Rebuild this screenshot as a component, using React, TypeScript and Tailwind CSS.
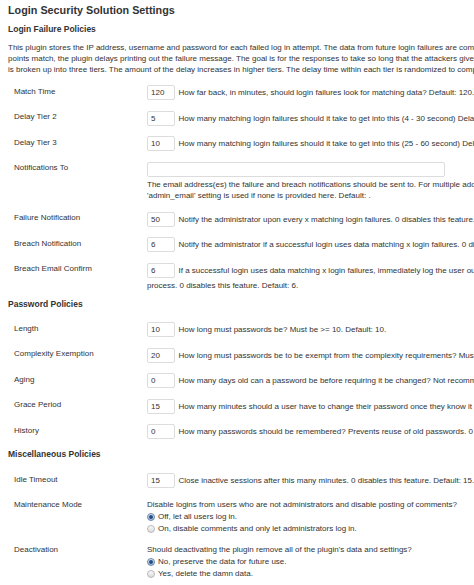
import React from "react";

type Row = {
  label: string;
  value: string;
  help: string;
  more?: string;
};

const failureRows: Row[] = [
  {
    label: "Match Time",
    value: "120",
    help: "How far back, in minutes, should login failures look for matching data? Default: 120.",
  },
  {
    label: "Delay Tier 2",
    value: "5",
    help: "How many matching login failures should it take to get into this (4 - 30 second) Delay Tier? Must be >= 2. Default: 5.",
  },
  {
    label: "Delay Tier 3",
    value: "10",
    help: "How many matching login failures should it take to get into this (25 - 60 second) Delay Tier? Must be > Delay Tier 2. Default: 10.",
  },
];

const notifyRows: Row[] = [
  {
    label: "Failure Notification",
    value: "50",
    help: "Notify the administrator upon every x matching login failures. 0 disables this feature. Default: 50.",
  },
  {
    label: "Breach Notification",
    value: "6",
    help: "Notify the administrator if a successful login uses data matching x login failures. 0 disables this feature. Default: 6.",
  },
  {
    label: "Breach Email Confirm",
    value: "6",
    help: "If a successful login uses data matching x login failures, immediately log the user out and require them to use WordPress' lost password",
    more: "process. 0 disables this feature. Default: 6.",
  },
];

const passwordRows: Row[] = [
  { label: "Length", value: "10", help: "How long must passwords be? Must be >= 10. Default: 10." },
  {
    label: "Complexity Exemption",
    value: "20",
    help: "How long must passwords be to be exempt from the complexity requirements? Must be >= Length. Default: 20.",
  },
  {
    label: "Aging",
    value: "0",
    help: "How many days old can a password be before requiring it be changed? Not recommended. 0 disables this feature. Default: 0.",
  },
  {
    label: "Grace Period",
    value: "15",
    help: "How many minutes should a user have to change their password once they know it has expired? Must be >= 5. Default: 15.",
  },
  {
    label: "History",
    value: "0",
    help: "How many passwords should be remembered? Prevents reuse of old passwords. 0 disables this feature. Default: 0.",
  },
];

function SmallInput({ value }: { value: string }) {
  return (
    <input
      type="text"
      defaultValue={value}
      className="h-[15px] w-[28px] shrink-0 rounded-[2px] border border-[#dcdcdc] bg-white pl-[3px] text-[8px] leading-[13px] text-[#333] outline-none"
    />
  );
}

function Label({ children }: { children: React.ReactNode }) {
  return <div className="w-[133px] shrink-0 pt-[0.5px] leading-[11px]">{children}</div>;
}

function SettingRow({ row }: { row: Row }) {
  return (
    <div className="flex items-start py-[5.25px] pl-[14px]">
      <Label>{row.label}</Label>
      <div className="flex flex-col">
        <div className="flex items-center gap-[3.5px] whitespace-nowrap">
          <SmallInput value={row.value} />
          <span className="leading-[15px]">{row.help}</span>
        </div>
        {row.more ? (
          <div className="mt-[2px] whitespace-nowrap leading-[11px]">{row.more}</div>
        ) : null}
      </div>
    </div>
  );
}

function Radio({ checked, text }: { checked?: boolean; text: string }) {
  return (
    <label className="flex h-[12px] items-center gap-[3px] whitespace-nowrap">
      {checked ? (
        <span className="flex h-[8px] w-[8px] shrink-0 items-center justify-center rounded-full border border-[#6d86a8] bg-gradient-to-b from-[#dfe8f4] to-[#a9bdd8]">
          <span className="h-[3.5px] w-[3.5px] rounded-full bg-[#1f4f8c]" />
        </span>
      ) : (
        <span className="h-[8px] w-[8px] shrink-0 rounded-full border border-[#b8b8b8] bg-gradient-to-b from-[#fafafa] to-[#dcdcdc]" />
      )}
      <span>{text}</span>
    </label>
  );
}

function Heading({ children, className }: { children: React.ReactNode; className?: string }) {
  return (
    <h3 className={`px-[8px] text-[8.5px] font-bold leading-[11px] text-[#333] ${className ?? ""}`}>
      {children}
    </h3>
  );
}

export default function App() {
  return (
    <div className="h-[585px] w-[474px] overflow-hidden bg-white font-['Liberation_Sans',Arial,sans-serif] text-[8px] text-[#333]">
      <h2 className="px-[8px] pt-[3px] text-[10.8px] font-bold leading-[14px] text-[#333]">
        Login Security Solution Settings
      </h2>

      <Heading className="mt-[6.5px]">Login Failure Policies</Heading>

      <div className="mt-[7px] whitespace-nowrap px-[8px] leading-[11px]">
        <div>
          This plugin stores the IP address, username and password for each failed log in attempt. The data from future login failures are compared against the historical data. If any of the data
        </div>
        <div>
          points match, the plugin delays printing out the failure message. The goal is for the responses to take so long that the attackers give up and go find an easier target. The length of the delay
        </div>
        <div>
          is broken up into three tiers. The amount of the delay increases in higher tiers. The delay time within each tier is randomized to complicate profiling by attackers.
        </div>
      </div>

      <div className="mt-[5.25px]">
        {failureRows.map((r) => (
          <SettingRow key={r.label} row={r} />
        ))}

        <div className="flex items-start py-[5.25px] pl-[14px]">
          <Label>Notifications To</Label>
          <div className="flex flex-col">
            <input
              type="text"
              defaultValue=""
              className="h-[15px] w-[298px] rounded-[2px] border border-[#dcdcdc] bg-white outline-none"
            />
            <div className="mt-[2.5px] whitespace-nowrap leading-[11px]">
              <div>
                The email address(es) the failure and breach notifications should be sent to. For multiple addresses, separate them with commas. WordPress'
              </div>
              <div>'admin_email' setting is used if none is provided here. Default: .</div>
            </div>
          </div>
        </div>

        {notifyRows.map((r) => (
          <SettingRow key={r.label} row={r} />
        ))}
      </div>

      <Heading className="mt-[2.75px]">Password Policies</Heading>

      <div className="mt-[7.25px]">
        {passwordRows.map((r) => (
          <SettingRow key={r.label} row={r} />
        ))}
      </div>

      <Heading className="mt-[4.25px]">Miscellaneous Policies</Heading>

      <div className="mt-[8.25px]">
        <SettingRow
          row={{
            label: "Idle Timeout",
            value: "15",
            help: "Close inactive sessions after this many minutes. 0 disables this feature. Default: 15.",
          }}
        />

        <div className="flex items-start pb-[4.5px] pl-[14px] pt-[5.75px] leading-[12px]">
          <div className="w-[133px] shrink-0">Maintenance Mode</div>
          <div className="flex flex-col">
            <div className="whitespace-nowrap">
              Disable logins from users who are not administrators and disable posting of comments?
            </div>
            <Radio checked text="Off, let all users log in." />
            <Radio text="On, disable comments and only let administrators log in." />
          </div>
        </div>

        <div className="flex items-start pl-[14px] pt-[4.5px] leading-[12px]">
          <div className="w-[133px] shrink-0">Deactivation</div>
          <div className="flex flex-col">
            <div className="whitespace-nowrap">
              Should deactivating the plugin remove all of the plugin's data and settings?
            </div>
            <Radio checked text="No, preserve the data for future use." />
            <Radio text="Yes, delete the damn data." />
          </div>
        </div>
      </div>
    </div>
  );
}
